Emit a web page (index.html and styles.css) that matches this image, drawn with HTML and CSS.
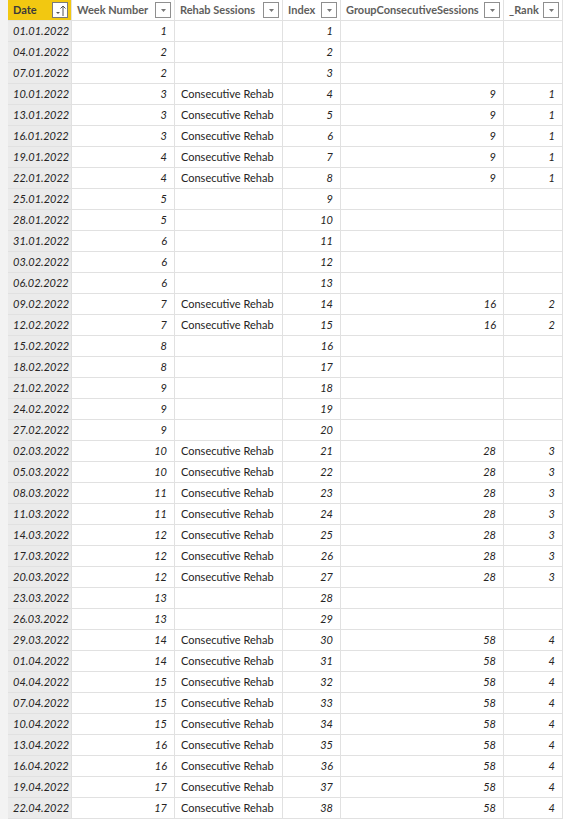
FILE: index.html
```html
<!DOCTYPE html>
<html>
<head>
<meta charset="utf-8">
<link rel="stylesheet" href="styles.css">
</head>
<body>
<div class="grid" id="grid">
  <div class="row head">
    <div class="hc date-h"><span>Date</span><span class="btn sort"><svg width="13" height="13" viewBox="0 0 13 13"><path d="M2 8 L6 8 L4 10 Z" fill="#555"/><path d="M9 2 L9 12 M6.5 4.5 L9 2 L11.5 4.5" stroke="#555" stroke-width="1" fill="none"/></svg></span></div>
    <div class="hc"><span>Week Number</span><span class="btn"><svg width="13" height="13" viewBox="0 0 13 13"><path d="M4 5 L9 5 L6.5 8 Z" fill="#777"/></svg></span></div>
    <div class="hc"><span>Rehab Sessions</span><span class="btn"><svg width="13" height="13" viewBox="0 0 13 13"><path d="M4 5 L9 5 L6.5 8 Z" fill="#777"/></svg></span></div>
    <div class="hc"><span>Index</span><span class="btn"><svg width="13" height="13" viewBox="0 0 13 13"><path d="M4 5 L9 5 L6.5 8 Z" fill="#777"/></svg></span></div>
    <div class="hc"><span>GroupConsecutiveSessions</span><span class="btn"><svg width="13" height="13" viewBox="0 0 13 13"><path d="M4 5 L9 5 L6.5 8 Z" fill="#777"/></svg></span></div>
    <div class="hc"><span>_Rank</span><span class="btn"><svg width="13" height="13" viewBox="0 0 13 13"><path d="M4 5 L9 5 L6.5 8 Z" fill="#777"/></svg></span></div>
  </div>
</div>
<script src="app.js"></script>
</body>
</html>
```
FILE: app.js
```js
const data = [
["01.01.2022",1,"",1,"",""],
["04.01.2022",2,"",2,"",""],
["07.01.2022",2,"",3,"",""],
["10.01.2022",3,"C",4,9,1],
["13.01.2022",3,"C",5,9,1],
["16.01.2022",3,"C",6,9,1],
["19.01.2022",4,"C",7,9,1],
["22.01.2022",4,"C",8,9,1],
["25.01.2022",5,"",9,"",""],
["28.01.2022",5,"",10,"",""],
["31.01.2022",6,"",11,"",""],
["03.02.2022",6,"",12,"",""],
["06.02.2022",6,"",13,"",""],
["09.02.2022",7,"C",14,16,2],
["12.02.2022",7,"C",15,16,2],
["15.02.2022",8,"",16,"",""],
["18.02.2022",8,"",17,"",""],
["21.02.2022",9,"",18,"",""],
["24.02.2022",9,"",19,"",""],
["27.02.2022",9,"",20,"",""],
["02.03.2022",10,"C",21,28,3],
["05.03.2022",10,"C",22,28,3],
["08.03.2022",11,"C",23,28,3],
["11.03.2022",11,"C",24,28,3],
["14.03.2022",12,"C",25,28,3],
["17.03.2022",12,"C",26,28,3],
["20.03.2022",12,"C",27,28,3],
["23.03.2022",13,"",28,"",""],
["26.03.2022",13,"",29,"",""],
["29.03.2022",14,"C",30,58,4],
["01.04.2022",14,"C",31,58,4],
["04.04.2022",15,"C",32,58,4],
["07.04.2022",15,"C",33,58,4],
["10.04.2022",15,"C",34,58,4],
["13.04.2022",16,"C",35,58,4],
["16.04.2022",16,"C",36,58,4],
["19.04.2022",17,"C",37,58,4],
["22.04.2022",17,"C",38,58,4]
];
const grid = document.getElementById("grid");
for (const r of data) {
  const row = document.createElement("div");
  row.className = "row";
  const cells = [
    ["c date", r[0]],
    ["c num", r[1]],
    ["c txt", r[2] === "C" ? "Consecutive Rehab" : ""],
    ["c num", r[3]],
    ["c num", r[4]],
    ["c num", r[5]]
  ];
  for (const [cls, v] of cells) {
    const d = document.createElement("div");
    d.className = cls;
    d.textContent = v;
    row.appendChild(d);
  }
  grid.appendChild(row);
}
```
FILE: styles.css
```css
html, body {
  margin: 0;
  padding: 0;
  background: #ffffff;
}
body {
  font-family: Lato, "Liberation Sans", sans-serif;
  font-size: 11px;
  color: #252423;
  width: 568px;
  height: 819px;
  overflow: hidden;
}
.grid {
  display: flex;
  flex-direction: column;
  width: 568px;
  background: linear-gradient(to right, #f3f3f3 0, #f3f3f3 8px, #ffffff 8px);
}
.row {
  display: grid;
  grid-template-columns: 64px 103px 108px 58px 163px 59px;
  margin-left: 8px;
  height: 21px;
}
.row > div {
  box-sizing: border-box;
  border-right: 1px solid #e1e1e1;
  border-bottom: 1px solid #e1e1e1;
  height: 21px;
  line-height: 20px;
  white-space: nowrap;
  overflow: hidden;
}
.hc {
  display: flex;
  align-items: center;
  justify-content: space-between;
  padding: 0 3px 0 5px;
  color: #605e5c;
  font-weight: bold;
  font-size: 11px;
  background: #ffffff;
}
.date-h {
  background: #f2c811;
  color: #3b3a39;
}
.btn {
  box-sizing: border-box;
  width: 16px;
  height: 16px;
  border: 1px solid #8f8f8f;
  background: #ffffff;
  display: flex;
  align-items: center;
  justify-content: center;
  flex: none;
}
.btn.sort {
  background: #ffffff;
  border-color: #7a7a7a;
}
.c.date {
  background: #ebebeb;
  font-style: italic;
  padding-left: 5px;
}
.c.num {
  text-align: right;
  font-style: italic;
  padding-right: 7px;
}
.c.txt {
  padding-left: 6px;
}
```
